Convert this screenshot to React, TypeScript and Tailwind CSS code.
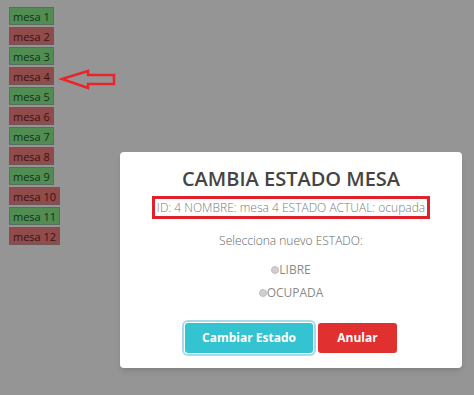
import React from 'react';

const mesas = [
  { id: 1, libre: true },
  { id: 2, libre: false },
  { id: 3, libre: true },
  { id: 4, libre: false },
  { id: 5, libre: true },
  { id: 6, libre: false },
  { id: 7, libre: true },
  { id: 8, libre: false },
  { id: 9, libre: true },
  { id: 10, libre: false },
  { id: 11, libre: true },
  { id: 12, libre: false },
];

function Radio({ label }: { label: string }) {
  return (
    <label className="flex items-center text-[12px] leading-none text-[#8a8a8a]">
      <span className="w-[8px] h-[8px] rounded-full bg-[#d0d0d0] border border-[#bdbdbd]" />
      <span>{label}</span>
    </label>
  );
}

export default function App() {
  return (
    <div
      className="relative w-[474px] h-[395px] overflow-hidden bg-[#959595]"
      style={{ fontFamily: '"Open Sans", "Noto Sans", sans-serif' }}
    >
      {/* lista de mesas */}
      <div className="flex flex-col items-start gap-[2px] pt-[7px] pl-[9px]">
        {mesas.map((m) => (
          <div
            key={m.id}
            className={
              'h-[18px] px-[3px] flex items-center border text-[11px] leading-none ' +
              (m.libre
                ? 'bg-[#518c52] border-[#5b6e5b] text-[#12301a]'
                : 'bg-[#904b4b] border-[#6e5757] text-[#3a1313]')
            }
          >
            mesa {m.id}
          </div>
        ))}
      </div>

      {/* flecha */}
      <svg className="absolute left-[58px] top-[68px]" width="60" height="24" viewBox="0 0 60 24">
        <polygon
          points="4,11 30,3 30,7 56,7 56,16 30,16 30,20"
          fill="none"
          stroke="#e8262a"
          strokeWidth="2.5"
          strokeLinejoin="miter"
        />
      </svg>

      {/* modal */}
      <div className="absolute left-[120px] top-[152px] w-[342px] h-[216px] bg-white rounded-[4px] shadow-md flex flex-col items-center pt-[15px]">
        <h1 className="text-[20px] leading-[24px] font-semibold text-[#444]">CAMBIA ESTADO MESA</h1>
        <div className="mt-[5px] h-[23px] px-[2px] flex items-center border-[3px] border-[#e0202a] text-[12px] font-light text-[#7a7a7a]">
          ID: 4 NOMBRE: mesa 4 ESTADO ACTUAL: ocupada
        </div>
        <p className="mt-[13px] text-[12px] font-light text-[#666]">Selecciona nuevo ESTADO:</p>
        <div className="mt-[14px] flex flex-col items-center gap-[11px]">
          <Radio label="LIBRE" />
          <Radio label="OCUPADA" />
        </div>
        <div className="mt-[24px] flex items-center gap-[5px]">
          <button className="w-[128px] h-[30px] rounded-[3px] bg-[#33c3d1] text-white text-[12px] font-bold ring-2 ring-[#a8dbe8] ring-offset-1">
            Cambiar Estado
          </button>
          <button className="w-[79px] h-[30px] rounded-[3px] bg-[#e0302f] text-white text-[12px] font-bold">
            Anular
          </button>
        </div>
      </div>
    </div>
  );
}
